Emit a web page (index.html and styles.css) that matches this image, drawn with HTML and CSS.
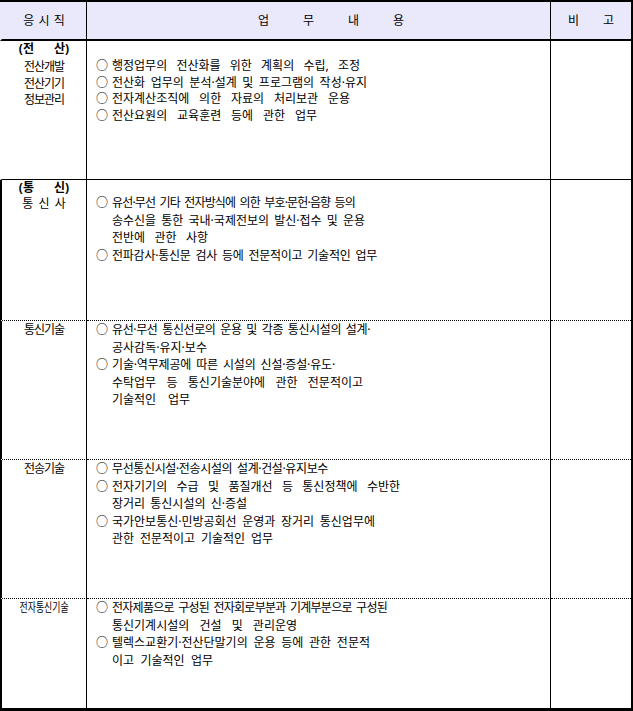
FILE: index.html
```html
<!DOCTYPE html>
<html lang="ko">
<head>
<meta charset="utf-8">
<title>응시직 업무내용</title>
<link rel="stylesheet" href="styles.css">
</head>
<body>
<div class="sheet">
  <div class="cell head c1"><span>응 시 직</span></div>
  <div class="cell head c2"><span>업</span><span>무</span><span>내</span><span>용</span></div>
  <div class="cell head c3"><span>비</span><span>고</span></div>

  <div class="cell c1 r1 noleft">
    <div class="grp">(전 산)</div>
    <div class="nm">전산개발</div>
    <div class="nm">전산기기</div>
    <div class="nm">정보관리</div>
  </div>
  <div class="cell c2 r1">
    <div class="it"><span class="ln"><span class="bul">○</span><span class="t" data-w="248">행정업무의 전산화를 위한 계획의 수립, 조정</span></span></div>
    <div class="it"><span class="ln"><span class="bul">○</span><span class="t" data-w="255">전산화 업무의 분석·설계 및 프로그램의 작성·유지</span></span></div>
    <div class="it"><span class="ln"><span class="bul">○</span><span class="t" data-w="238">전자계산조직에 의한 자료의 처리보관 운용</span></span></div>
    <div class="it"><span class="ln"><span class="bul">○</span><span class="t" data-w="205">전산요원의 교육훈련 등에 관한 업무</span></span></div>
  </div>
  <div class="cell c3 r1"></div>

  <div class="cell c1 r2">
    <div class="grp">(통 신)</div>
    <div class="nm sp">통 신 사</div>
  </div>
  <div class="cell c2 r2">
    <div class="it">
      <span class="ln"><span class="bul">○</span><span class="t" data-w="243">유선·무선 기타 전자방식에 의한 부호·문헌·음향 등의</span></span>
      <span class="ln"><span class="t" data-w="253">송수신을 통한 국내·국제전보의 발신·접수 및 운용</span></span>
      <span class="ln"><span class="t" data-w="96">전반에 관한 사항</span></span>
    </div>
    <div class="it"><span class="ln"><span class="bul">○</span><span class="t" data-w="265">전파감사·통신문 검사 등에 전문적이고 기술적인 업무</span></span></div>
  </div>
  <div class="cell c3 r2"></div>

  <div class="cell c1 r3 dot">
    <div class="nm">통신기술</div>
  </div>
  <div class="cell c2 r3 dot">
    <div class="it">
      <span class="ln"><span class="bul">○</span><span class="t" data-w="258">유선·무선 통신선로의 운용 및 각종 통신시설의 설계·</span></span>
      <span class="ln"><span class="t" data-w="95">공사감독·유지·보수</span></span>
    </div>
    <div class="it">
      <span class="ln"><span class="bul">○</span><span class="t" data-w="223">기술·역무제공에 따른 시설의 신설·증설·유도·</span></span>
      <span class="ln"><span class="t" data-w="251">수탁업무 등 통신기술분야에 관한 전문적이고</span></span>
      <span class="ln"><span class="t" data-w="78">기술적인 업무</span></span>
    </div>
  </div>
  <div class="cell c3 r3 dot"></div>

  <div class="cell c1 r4 dot">
    <div class="nm">전송기술</div>
  </div>
  <div class="cell c2 r4 dot">
    <div class="it"><span class="ln"><span class="bul">○</span><span class="t" data-w="216">무선통신시설·전송시설의 설계·건설·유지보수</span></span></div>
    <div class="it">
      <span class="ln"><span class="bul">○</span><span class="t" data-w="288">전자기기의 수급 및 품질개선 등 통신정책에 수반한</span></span>
      <span class="ln"><span class="t" data-w="135">장거리 통신시설의 신·증설</span></span>
    </div>
    <div class="it">
      <span class="ln"><span class="bul">○</span><span class="t" data-w="263">국가안보통신·민방공회선 운영과 장거리 통신업무에</span></span>
      <span class="ln"><span class="t" data-w="161">관한 전문적이고 기술적인 업무</span></span>
    </div>
  </div>
  <div class="cell c3 r4 dot"></div>

  <div class="cell c1 r5 dot">
    <div class="nm"><span class="narrow">전자통신기술</span></div>
  </div>
  <div class="cell c2 r5 dot">
    <div class="it">
      <span class="ln"><span class="bul">○</span><span class="t" data-w="275">전자제품으로 구성된 전자회로부분과 기계부분으로 구성된</span></span>
      <span class="ln"><span class="t" data-w="185">통신기계시설의 건설 및 관리운영</span></span>
    </div>
    <div class="it">
      <span class="ln"><span class="bul">○</span><span class="t" data-w="258">텔렉스교환기·전산단말기의 운용 등에 관한 전문적</span></span>
      <span class="ln"><span class="t" data-w="101">이고 기술적인 업무</span></span>
    </div>
  </div>
  <div class="cell c3 r5 dot"></div>
</div>
<script src="script.js"></script>
</body>
</html>
```
FILE: styles.css
```css
html, body {
  margin: 0;
  padding: 0;
  background: #ffffff;
}

body {
  font-family: "Noto Sans", "Noto Sans CJK KR", sans-serif;
  font-size: 12px;
  color: #000000;
}

.sheet {
  width: 633px;
  height: 711px;
  box-sizing: border-box;
  border-top: 2px solid #000;
  border-right: 2px solid #000;
  border-bottom: 3px solid #000;
  display: grid;
  grid-template-columns: 87px 464px 80px;
  grid-template-rows: 39px 139px 140px 139px 139px 110px;
}

.cell {
  box-sizing: border-box;
  background: #ffffff;
}

.c1,
.c2 {
  border-right: 1px solid #000;
}

.c1 {
  border-left: 2px solid #000;
  text-align: center;
}

.c1.noleft,
.head.c1 {
  border-left: 2px solid transparent;
}

.head {
  background: #e9e9fb;
  border-bottom: 2px solid #000;
  display: flex;
  align-items: center;
  justify-content: center;
  line-height: 17px;
  padding-left: 0;
}

.head.c1 {
  word-spacing: 1px;
}

.head.c2 {
  gap: 34px;
}

.head.c3 {
  gap: 24px;
}

.r1 {
  border-bottom: 1px solid #000;
}

.dot {
  border-top: 1px dotted #000;
}

.grp {
  font-weight: bold;
  line-height: 15px;
  word-spacing: 17px;
}

.r1 .grp {
  margin-bottom: 3px;
}

.nm {
  line-height: 16.7px;
  letter-spacing: -1px;
}

.r2 .nm {
  line-height: 17.7px;
}

.r3 .nm,
.r4 .nm,
.r5 .nm {
  line-height: 17.5px;
}

.nm.sp {
  letter-spacing: 0;
  word-spacing: 2px;
}

.narrow {
  display: inline-block;
  letter-spacing: 0;
  transform: scaleX(0.74);
}

.c2 {
  padding-left: 25px;
}

.it {
  white-space: nowrap;
  word-spacing: 2px;
}

.ln {
  display: block;
}

.bul {
  display: inline-block;
  width: 16px;
  margin-left: -16px;
  word-spacing: 0;
  letter-spacing: 0;
}

.r1.c2 {
  padding-top: 17px;
}

.r1 .it {
  line-height: 16.7px;
}

.r2.c2 {
  padding-top: 14px;
}

.r2 .it {
  line-height: 17.7px;
}

.r3 .it,
.r4 .it,
.r5 .it {
  line-height: 17.5px;
}
```
FILE: script.js
```js
function fitLines() {
  document.querySelectorAll('.t[data-w]').forEach(function (el) {
    var target = parseFloat(el.getAttribute('data-w'));
    var width = el.getBoundingClientRect().width;
    var diff = target - width;
    var text = el.textContent;
    var spaces = (text.match(/ /g) || []).length;
    if (diff > 0 && spaces > 0) {
      el.style.wordSpacing = (2 + diff / spaces).toFixed(2) + 'px';
    } else {
      var n = Array.from(text).length;
      el.style.letterSpacing = (diff / n).toFixed(2) + 'px';
    }
  });
}

if (document.fonts && document.fonts.ready) {
  document.fonts.ready.then(fitLines);
} else {
  fitLines();
}
```
